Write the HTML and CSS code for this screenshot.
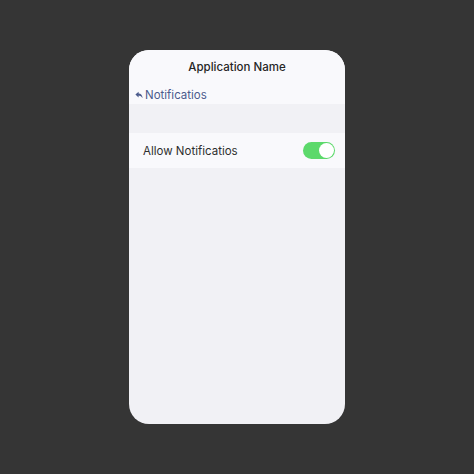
FILE: index.html
```html
<!DOCTYPE html>
<html lang="en">
<head>
    <link rel="stylesheet" href="styles.css">
    <title>Notifications</title>
</head>
<body>
    <div class="phone">
        <div class="top-bar">
            <h1 class="app-name">Application Name</h1>
            <div class="back">
                <svg class="back-icon" viewBox="0 0 10 10" width="8" height="8">
                    <path d="M0.5 4.5 L4.5 0.8 L4.5 3 Q9 3.2 9.5 9 Q8 5.6 4.5 5.6 L4.5 8 Z" fill="#4b5b8c"/>
                </svg>
                <span>Notificatios</span>
            </div>
        </div>
        <div class="spacer"></div>
        <div class="row">
            <span>Allow Notificatios</span>
            <div class="toggle"><div class="knob"></div></div>
        </div>
        <div class="rest"></div>
    </div>
</body>
</html>
```
FILE: styles.css
```css
body{
    margin: 0;
    background-color: #353535;
    font-family: Inter, "Noto Sans", sans-serif;
    height: 474px;
    display: flex;
    justify-content: center;
    align-items: flex-start;
}
.phone{
    margin-top: 50px;
    width: 216px;
    height: 374px;
    border-radius: 20px;
    background-color: #f1f1f5;
    overflow: hidden;
    display: flex;
    flex-direction: column;
}
.top-bar{
    background-color: #f9f9fc;
    height: 54px;
    display: flex;
    flex-direction: column;
}
.app-name{
    margin: 0;
    margin-top: 10px;
    text-align: center;
    font-size: 11.5px;
    font-weight: 500;
    color: #262626;
}
.back{
    margin-top: 14px;
    margin-left: 6px;
    display: flex;
    align-items: center;
    gap: 2px;
    color: #4b5b8c;
    font-size: 11.5px;
}
.spacer{
    height: 29px;
}
.row{
    background-color: #f9f9fc;
    height: 35px;
    display: flex;
    align-items: center;
    justify-content: space-between;
    padding: 0 10px 0 14px;
    font-size: 11.5px;
    color: #2e2e2e;
}
.toggle{
    width: 32px;
    height: 17px;
    border-radius: 9px;
    background-color: #5cd96b;
    display: flex;
    align-items: center;
    justify-content: flex-end;
    padding: 0 1px;
    box-sizing: border-box;
}
.knob{
    width: 15px;
    height: 15px;
    border-radius: 50%;
    background-color: #fff;
}
.rest{
    flex: 1;
}
```
